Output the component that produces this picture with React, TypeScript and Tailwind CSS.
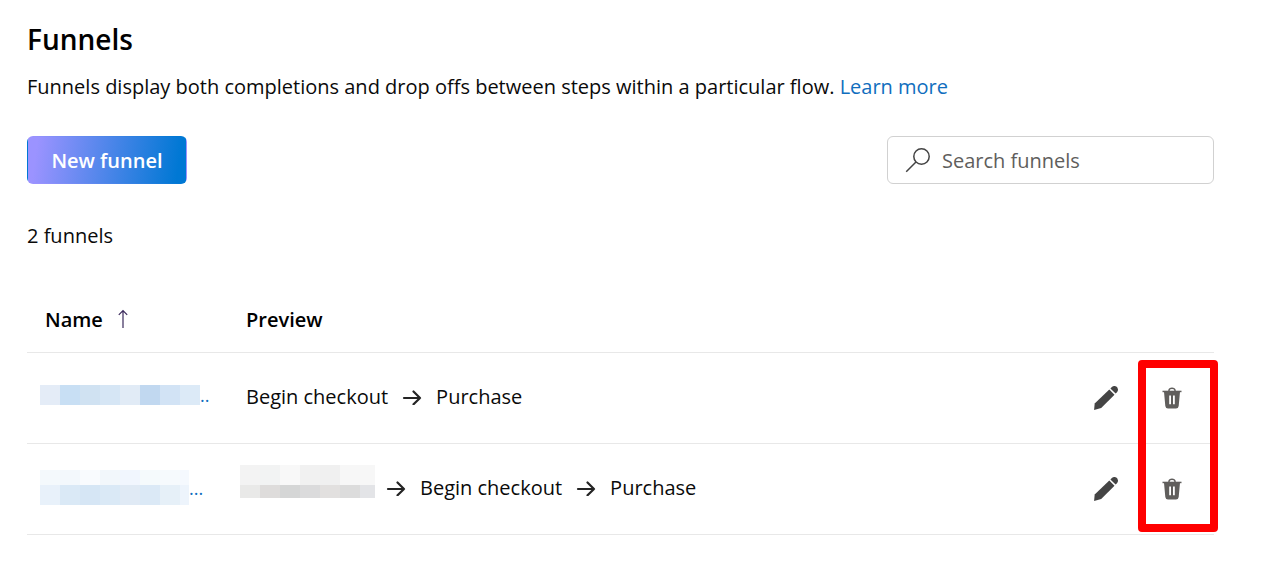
type MosaicProps = {
  width: number;
  heights: number[];
  rows: string[][];
};

type Funnel = {
  id: string;
  label: string;
  name: MosaicProps;
  dots: string;
  hidden?: MosaicProps;
  steps: string[];
};

const funnels: Funnel[] = [
  {
    id: 'first',
    label: 'first funnel',
    name: {
      width: 160,
      heights: [20],
      rows: [['#e4ecf7', '#c8dff4', '#d0e2f2', '#d6e6f5', '#e1ebf6', '#c1d8f0', '#d2e3f5', '#dceaf7']],
    },
    dots: '..',
    steps: ['Begin checkout', 'Purchase'],
  },
  {
    id: 'second',
    label: 'second funnel',
    name: {
      width: 149,
      heights: [15, 20],
      rows: [
        ['#f4f9fc', '#f3f8fc', '#f9fbfe', '#f2f7fb', '#f1f6fe', '#f5fafc', '#f6fafd', '#f5f9fe'],
        ['#e8f1fa', '#dae9f6', '#d6e6f5', '#dae9f6', '#e0eaf5', '#dbe9f6', '#e6f0f8', '#edf4fc'],
      ],
    },
    dots: '...',
    hidden: {
      width: 135,
      heights: [20, 13],
      rows: [
        ['#f3f3f3', '#f2f3f3', '#f8f8f8', '#f1f1f1', '#f0f0f0', '#f7f7f7', '#f7f7f7'],
        ['#e9e9e8', '#dedcdb', '#d5d6d6', '#dbdbdc', '#e2e0df', '#dcdcdc', '#e3e4e7'],
      ],
    },
    steps: ['Begin checkout', 'Purchase'],
  },
];

function Mosaic({ width, heights, rows }: MosaicProps) {
  const total = heights.reduce((sum, h) => sum + h, 0);
  return (
    <svg width={width} height={total} shapeRendering="crispEdges" className="shrink-0" aria-hidden="true">
      {rows.map((row, r) =>
        row.map((color, c) => (
          <rect key={`${r}-${c}`} x={c * 20} y={r === 0 ? 0 : heights[0]} width={20} height={heights[r]} fill={color} />
        )),
      )}
    </svg>
  );
}

function SearchIcon() {
  return (
    <svg width="26" height="26" viewBox="0 0 26 26" fill="none" stroke="#444" strokeWidth="1.5" aria-hidden="true">
      <circle cx="16.5" cy="9.5" r="7.7" />
      <path d="M11 15 1.2 24.8" />
    </svg>
  );
}

function SortIcon() {
  return (
    <svg width="10" height="22" viewBox="0 0 10 22" fill="none" stroke="#3b2a5c" strokeWidth="1.2" aria-hidden="true">
      <path d="M5 19V1.5M.8 5.8 5 1.5l4.2 4.3" />
    </svg>
  );
}

function ArrowIcon() {
  return (
    <svg
      width="20"
      height="16"
      viewBox="0 0 20 16"
      fill="none"
      stroke="#242424"
      strokeWidth="2.2"
      strokeLinecap="round"
      strokeLinejoin="round"
      className="shrink-0"
      aria-hidden="true"
    >
      <path d="M2 9h16M11.500 2.500 18 9l-6.500 6.300" />
    </svg>
  );
}

function PencilIcon() {
  return (
    <svg width="26" height="26" viewBox="0 0 26 26" fill="#444" aria-hidden="true">
      <path d="M16.300 4.500 21.500 9.700 8.200 22.900 1.100 24.900 1.700 18.500z" />
      <path d="M17.400 3.400 18.900 1.900Q20.200.8 22 1.100 24.600 1.700 25 4.300 25.200 6 24 7.200L22.600 8.600z" />
    </svg>
  );
}

function TrashIcon() {
  return (
    <svg width="20" height="22" viewBox="0 0 20 22" aria-hidden="true">
      <path d="M7 4.500V3.200Q7.400 1.200 10 1.200T13 3.200V4.500" fill="none" stroke="#605e5c" strokeWidth="1.500" />
      <path d="M.5 3.700H19.500V5.200H.5z" fill="#605e5c" />
      <path
        fillRule="evenodd"
        fill="#605e5c"
        d="M2 4.700H18L16.700 19Q16.300 21.500 14 21.500H6Q3.700 21.500 3.300 19zM7.200 8.500V17.300H9V8.500zM11 8.500V17.300H12.800V8.500z"
      />
    </svg>
  );
}

export default function App() {
  return (
    <main className="min-h-screen bg-white pt-5 pr-12 pb-12 pl-[27px] font-['Open_Sans','Noto_Sans',sans-serif] text-[20px] leading-7 text-[#0a0a0a]">
      <h1 className="text-[28px] leading-[38px] font-semibold text-black">Funnels</h1>
      <p className="mt-[15px]">
        Funnels display both completions and drop offs between steps within a particular flow.{' '}
        <a href="#learn-more" className="text-[#106ebe]">
          Learn more
        </a>
      </p>

      <div className="mt-[35px] flex items-center justify-between">
        <button
          type="button"
          className="h-12 w-40 rounded-md border border-transparent bg-[linear-gradient(98deg,#9b93ff_6%,#0078d4_94%)] pt-[2px] font-semibold text-white"
        >
          New funnel
        </button>
        <label className="flex h-12 w-[327px] items-center gap-[11px] rounded-md border border-[#d1d1d1] pr-4 pl-[17px]">
          <SearchIcon />
          <input
            type="search"
            aria-label="Search funnels"
            placeholder="Search funnels"
            className="min-w-0 flex-1 bg-transparent pt-[2px] outline-none placeholder:text-[#605e5c]"
          />
        </label>
      </div>

      <p className="mt-[38px]">2 funnels</p>

      <div className="relative mt-[38px]">
        <table className="w-full table-fixed border-collapse">
          <thead>
            <tr className="h-16 border-b border-[#e8e8e8] text-left text-black">
              <th className="w-[213px] pl-[18px] font-semibold">
                <span className="flex items-center gap-[15px]">
                  Name
                  <SortIcon />
                </span>
              </th>
              <th className="pl-[6px] font-semibold">Preview</th>
              <th className="w-[132px]" aria-label="Actions" />
            </tr>
          </thead>
          <tbody>
            {funnels.map((funnel) => (
              <tr key={funnel.id} className="h-[91px] border-b border-[#e8e8e8]">
                <td className={funnel.hidden ? 'pb-[2px] pl-[13px]' : 'pb-[6px] pl-[13px]'}>
                  <a href={`#${funnel.id}`} className="flex items-center text-[18px] text-[#106ebe]">
                    <Mosaic {...funnel.name} />
                    {funnel.dots}
                  </a>
                </td>
                <td className="pb-[2px]">
                  <div className="flex items-center">
                    {funnel.hidden ? (
                      <span className="mr-[14px] flex items-center gap-[11px]">
                        <span className="-mt-[13px]">
                          <Mosaic {...funnel.hidden} />
                        </span>
                        <ArrowIcon />
                      </span>
                    ) : null}
                    <span className={funnel.hidden ? 'flex items-center gap-[14px]' : 'flex items-center gap-[14px] pl-[6px]'}>
                      {funnel.steps.map((step, i) => (
                        <span key={step} className="flex items-center gap-[14px] whitespace-nowrap">
                          {i > 0 ? <ArrowIcon /> : null}
                          {step}
                        </span>
                      ))}
                    </span>
                  </div>
                </td>
                <td>
                  <div className="flex items-center justify-end gap-[43px] pr-8">
                    <button type="button" aria-label={`Edit ${funnel.label}`}>
                      <PencilIcon />
                    </button>
                    <button type="button" aria-label={`Delete ${funnel.label}`}>
                      <TrashIcon />
                    </button>
                  </div>
                </td>
              </tr>
            ))}
          </tbody>
        </table>
        <div className="pointer-events-none absolute top-[72px] -right-1 bottom-[3px] w-20 rounded-[4px] border-8 border-[#ff0000]" />
      </div>
    </main>
  );
}
